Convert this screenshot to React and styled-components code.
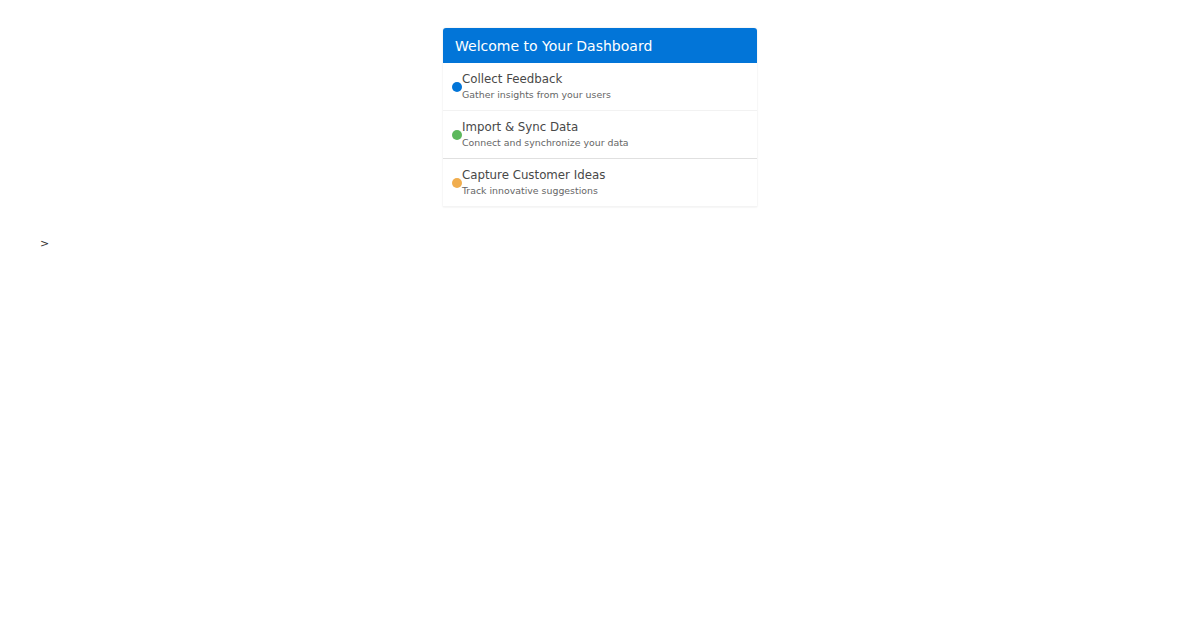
import React from 'react'
import styled, { createGlobalStyle } from 'styled-components'

const GlobalStyle = createGlobalStyle`
  body {
    margin: 0;
    padding: 8px;
    background: #fff;
    font-family: "DejaVu Sans", Verdana, sans-serif;
  }
`

const Card = styled.div`
  width: 314px;
  margin: 20px auto 0;
  background: #fff;
  border-radius: 3px 3px 0 0;
  box-shadow: 0 0 2px rgba(0, 0, 0, 0.12);
  overflow: hidden;
`

const Header = styled.div`
  background: #0275d8;
  color: #fff;
  height: 35px;
  display: flex;
  align-items: center;
  padding: 0 12px;
  font-size: 14px;
`

const Item = styled.div`
  display: flex;
  align-items: center;
  height: 48px;
  padding: 0 9px;
  box-sizing: border-box;
  border-bottom: 1px solid ${p => p.$line};
`

const Dot = styled.span`
  width: 10px;
  height: 10px;
  border-radius: 50%;
  background: ${p => p.$color};
  flex-shrink: 0;
`

const Texts = styled.div`
  display: flex;
  flex-direction: column;
  gap: 3px;
  margin-top: -1px;
`

const ItemTitle = styled.div`
  font-size: 11.8px;
  color: #484848;
  line-height: 14px;
`

const ItemSub = styled.div`
  font-size: 9.4px;
  color: #666;
  line-height: 12px;
`

const Stray = styled.div`
  margin: 30px 0 0 32px;
  font-size: 11px;
  color: #333;
`

const items = [
  { title: 'Collect Feedback', sub: 'Gather insights from your users', color: '#0275d8', line: '#f2f2f2' },
  { title: 'Import & Sync Data', sub: 'Connect and synchronize your data', color: '#5cb85c', line: '#e0e0e0' },
  { title: 'Capture Customer Ideas', sub: 'Track innovative suggestions', color: '#f0ad4e', line: '#f4f4f4' },
]

const App = () => {
  return (
    <>
      <GlobalStyle />
      <Card>
        <Header>Welcome to Your Dashboard</Header>
        {items.map(it => (
          <Item key={it.title} $line={it.line}>
            <Dot $color={it.color} />
            <Texts>
              <ItemTitle>{it.title}</ItemTitle>
              <ItemSub>{it.sub}</ItemSub>
            </Texts>
          </Item>
        ))}
      </Card>
      <Stray>&gt;</Stray>
    </>
  )
}

export default App
